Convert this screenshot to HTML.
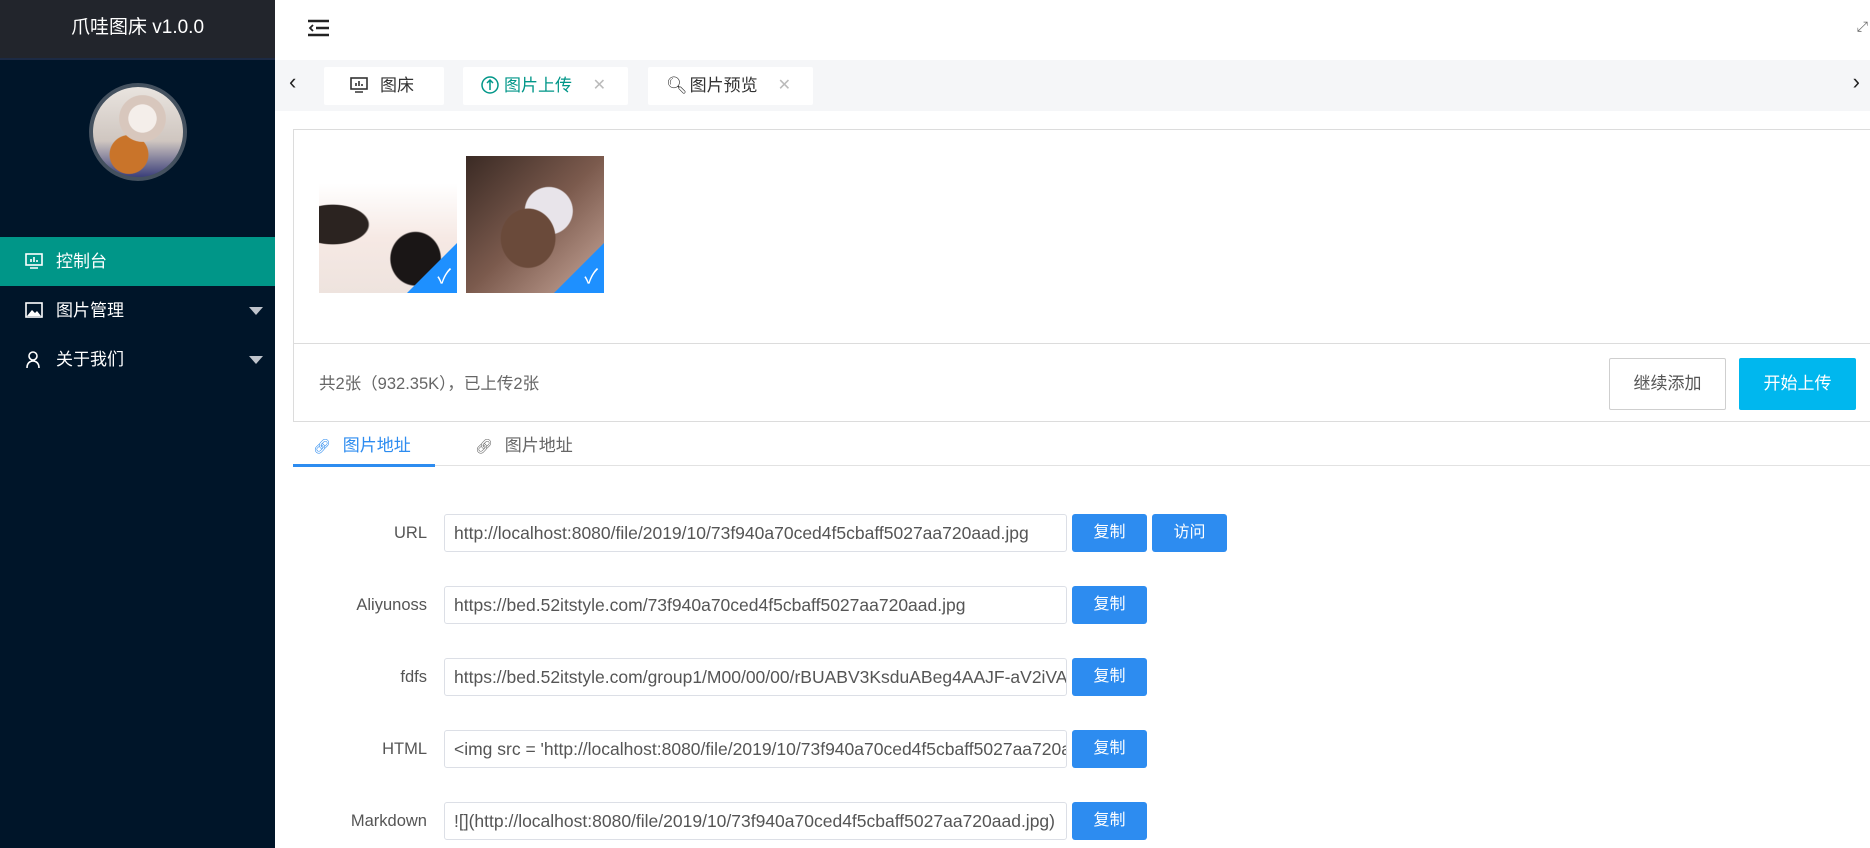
<!DOCTYPE html>
<html><head><meta charset="utf-8"><style>
*{margin:0;padding:0;box-sizing:border-box}
body{width:1870px;height:848px;overflow:hidden;font-family:"Liberation Sans","Noto Sans CJK SC",sans-serif;background:#fff;position:relative;color:#333}
.side{position:absolute;left:0;top:0;width:275px;height:848px;background:#001529}
.logo{height:60px;background:#22252c;color:#fff;font-size:19px;text-align:center;line-height:56px;border-bottom:2px solid #1c2a44}
.av{position:absolute;left:89px;top:83px;width:98px;height:98px;border-radius:50%;border:4px solid #44515f;background:radial-gradient(circle at 55% 35%,#f4eeea 0 18%,#d8c7bd 19% 30%,transparent 31%),radial-gradient(circle at 40% 75%,#c9742a 0 22%,transparent 23%),linear-gradient(#e9e4df,#cfc6c0 60%,#3b3f7a)}
.mi{position:absolute;left:0;width:275px;height:49px;color:#fff;font-size:17px;line-height:49px;padding-left:56px}
.mi.act{background:#009688}
.mi svg{position:absolute;left:25px;top:16px}
.arr{position:absolute;right:12px;top:21px;border:7px solid transparent;border-top:8px solid #bfc4cc;border-bottom:0}
.top{position:absolute;left:275px;top:0;right:0;height:60px;background:#fff}
.tabs{position:absolute;left:275px;top:60px;right:0;height:51px;background:#f5f6f8}
.tab{position:absolute;top:7px;height:38px;background:#fff;font-size:17px;line-height:38px;color:#333;border-radius:2px}
.x{color:#bbb;font-size:16px;position:absolute;right:22px}
.box{position:absolute;left:293px;top:129px;width:1590px;height:293px;border:1px solid #dcdcdc}
.foot{position:absolute;left:0;top:213px;width:100%;height:79px;border-top:1px solid #dcdcdc}
.thumb{position:absolute;top:26px;width:138px;height:137px;overflow:hidden}
.chk{position:absolute;right:0;bottom:0;width:0;height:0;border-left:50px solid transparent;border-bottom:50px solid #1e90ff}
.ck{position:absolute;right:6px;bottom:4px;color:#fff;font-size:20px}
.btn{position:absolute;height:52px;line-height:52px;text-align:center;font-size:17px;border-radius:2px}
.t2{position:absolute;top:431px;font-size:17px;color:#666}
.lbl{position:absolute;width:427px;left:0;text-align:right;font-size:16.5px;color:#555}
.inp{position:absolute;left:444px;width:623px;height:38px;border:1px solid #dcdfe6;border-radius:3px;font-size:17.5px;color:#555;line-height:36px;padding-left:9px;white-space:nowrap;overflow:hidden}
.b{position:absolute;width:75px;height:38px;background:#2d8cf0;color:#fff;text-align:center;line-height:38px;font-size:16px;border-radius:3px}
</style></head><body>
<div class="side">
<div class="logo">爪哇图床 v1.0.0</div>
<div class="av"></div>
<div class="mi act" style="top:237px"><svg width="18" height="16" viewBox="0 0 18 16" fill="none" stroke="#fff" stroke-width="1.6"><rect x="1" y="1" width="16" height="11"/><path d="M5 15h8M6 9V6M9 9V4M12 9V7"/></svg>控制台</div>
<div class="mi" style="top:286px"><svg width="18" height="16" viewBox="0 0 18 16"><rect x="1" y="1" width="16" height="14" fill="none" stroke="#fff" stroke-width="1.6"/><path d="M2 14l5-6 3 3 2-2 4 5z" fill="#fff"/></svg>图片管理<span class="arr"></span></div>
<div class="mi" style="top:335px"><svg width="16" height="18" viewBox="0 0 16 18" fill="none" stroke="#fff" stroke-width="1.6"><circle cx="8" cy="5" r="4"/><path d="M2 17c0-5 3-7 6-7s6 2 6 7"/></svg>关于我们<span class="arr"></span></div>
</div>
<div class="top"><svg style="position:absolute;left:33px;top:19px" width="21" height="18" viewBox="0 0 21 18" fill="none" stroke="#222" stroke-width="2.4"><path d="M0 2h21M8 9h13M0 16h21"/><path d="M5 6L2 9l3 3" stroke-width="1.8"/></svg>
<span style="position:absolute;right:2px;top:18px;font-size:14px;color:#666">⤢</span></div>
<div class="tabs">
<span style="position:absolute;left:14px;top:9px;font-size:22px;color:#222">‹</span>
<div class="tab" style="left:49px;width:120px;padding-left:26px"><svg style="vertical-align:-3px;margin-right:12px" width="18" height="17" viewBox="0 0 18 17" fill="none" stroke="#333" stroke-width="1.6"><rect x="1" y="1" width="16" height="11"/><path d="M5 15h8M6 9V6M9 9V4M12 9V7"/></svg>图床</div>
<div class="tab" style="left:188px;width:165px;padding-left:18px;color:#009688"><svg style="vertical-align:-3px;margin-right:5px" width="18" height="18" viewBox="0 0 18 18" fill="none" stroke="#009688" stroke-width="1.5"><circle cx="9" cy="9" r="8"/><path d="M9 14V4M6 7l3-3 3 3"/></svg>图片上传<span class="x">✕</span></div>
<div class="tab" style="left:373px;width:165px;padding-left:18px"><span style="font-size:17px;margin-right:2px">🔍︎</span>图片预览<span class="x">✕</span></div>
<span style="position:absolute;right:10px;top:9px;font-size:22px;color:#222">›</span>
</div>
<div class="box">
<div class="thumb" style="left:25px;background:radial-gradient(ellipse at 70% 75%,#1a1616 0 18%,transparent 19%),radial-gradient(ellipse at 10% 50%,#2b2320 0 20%,transparent 21%),linear-gradient(#fff 0 20%,#f6e9e4 60%,#eee3de)"><div class="chk"></div><span class="ck">✓</span></div>
<div class="thumb" style="left:172px;background:radial-gradient(ellipse at 45% 60%,#6a4a3a 0 25%,transparent 26%),radial-gradient(ellipse at 60% 40%,#e8e4ea 0 20%,transparent 21%),linear-gradient(135deg,#3a2a24,#7b5a4d 50%,#c8a79a)"><div class="chk"></div><span class="ck">✓</span></div>
<div class="foot">
<span style="position:absolute;left:25px;top:26px;font-size:16.5px;color:#666">共2张（932.35K），已上传2张</span>
<div class="btn" style="left:1315px;top:14px;width:117px;border:1px solid #cfcfcf;color:#555;line-height:50px">继续添加</div>
<div class="btn" style="left:1445px;top:14px;width:117px;background:#00b7ee;color:#fff">开始上传</div>
</div></div>
<div class="t2" style="left:313px;color:#2d8cf0"><span style="font-size:14px;margin-right:12px">🔗︎</span>图片地址</div>
<div class="t2" style="left:475px"><span style="font-size:14px;margin-right:12px">🔗︎</span>图片地址</div>
<div style="position:absolute;left:293px;top:465px;right:0;height:1px;background:#e2e2e2"></div>
<div style="position:absolute;left:293px;top:464px;width:142px;height:3px;background:#2d8cf0"></div>

<div class="lbl" style="top:524px">URL</div><div class="inp" style="top:514px">http://localhost:8080/file/2019/10/73f940a70ced4f5cbaff5027aa720aad.jpg</div><div class="b" style="left:1072px;top:514px">复制</div><div class="b" style="left:1152px;top:514px">访问</div>
<div class="lbl" style="top:596px">Aliyunoss</div><div class="inp" style="top:586px">https://bed.52itstyle.com/73f940a70ced4f5cbaff5027aa720aad.jpg</div><div class="b" style="left:1072px;top:586px">复制</div>
<div class="lbl" style="top:668px">fdfs</div><div class="inp" style="top:658px">https://bed.52itstyle.com/group1/M00/00/00/rBUABV3KsduABeg4AAJF-aV2iVA</div><div class="b" style="left:1072px;top:658px">复制</div>
<div class="lbl" style="top:740px">HTML</div><div class="inp" style="top:730px">&lt;img src = 'http://localhost:8080/file/2019/10/73f940a70ced4f5cbaff5027aa720aad.jpg'</div><div class="b" style="left:1072px;top:730px">复制</div>
<div class="lbl" style="top:812px">Markdown</div><div class="inp" style="top:802px">![](http://localhost:8080/file/2019/10/73f940a70ced4f5cbaff5027aa720aad.jpg)</div><div class="b" style="left:1072px;top:802px">复制</div>
</body></html>
